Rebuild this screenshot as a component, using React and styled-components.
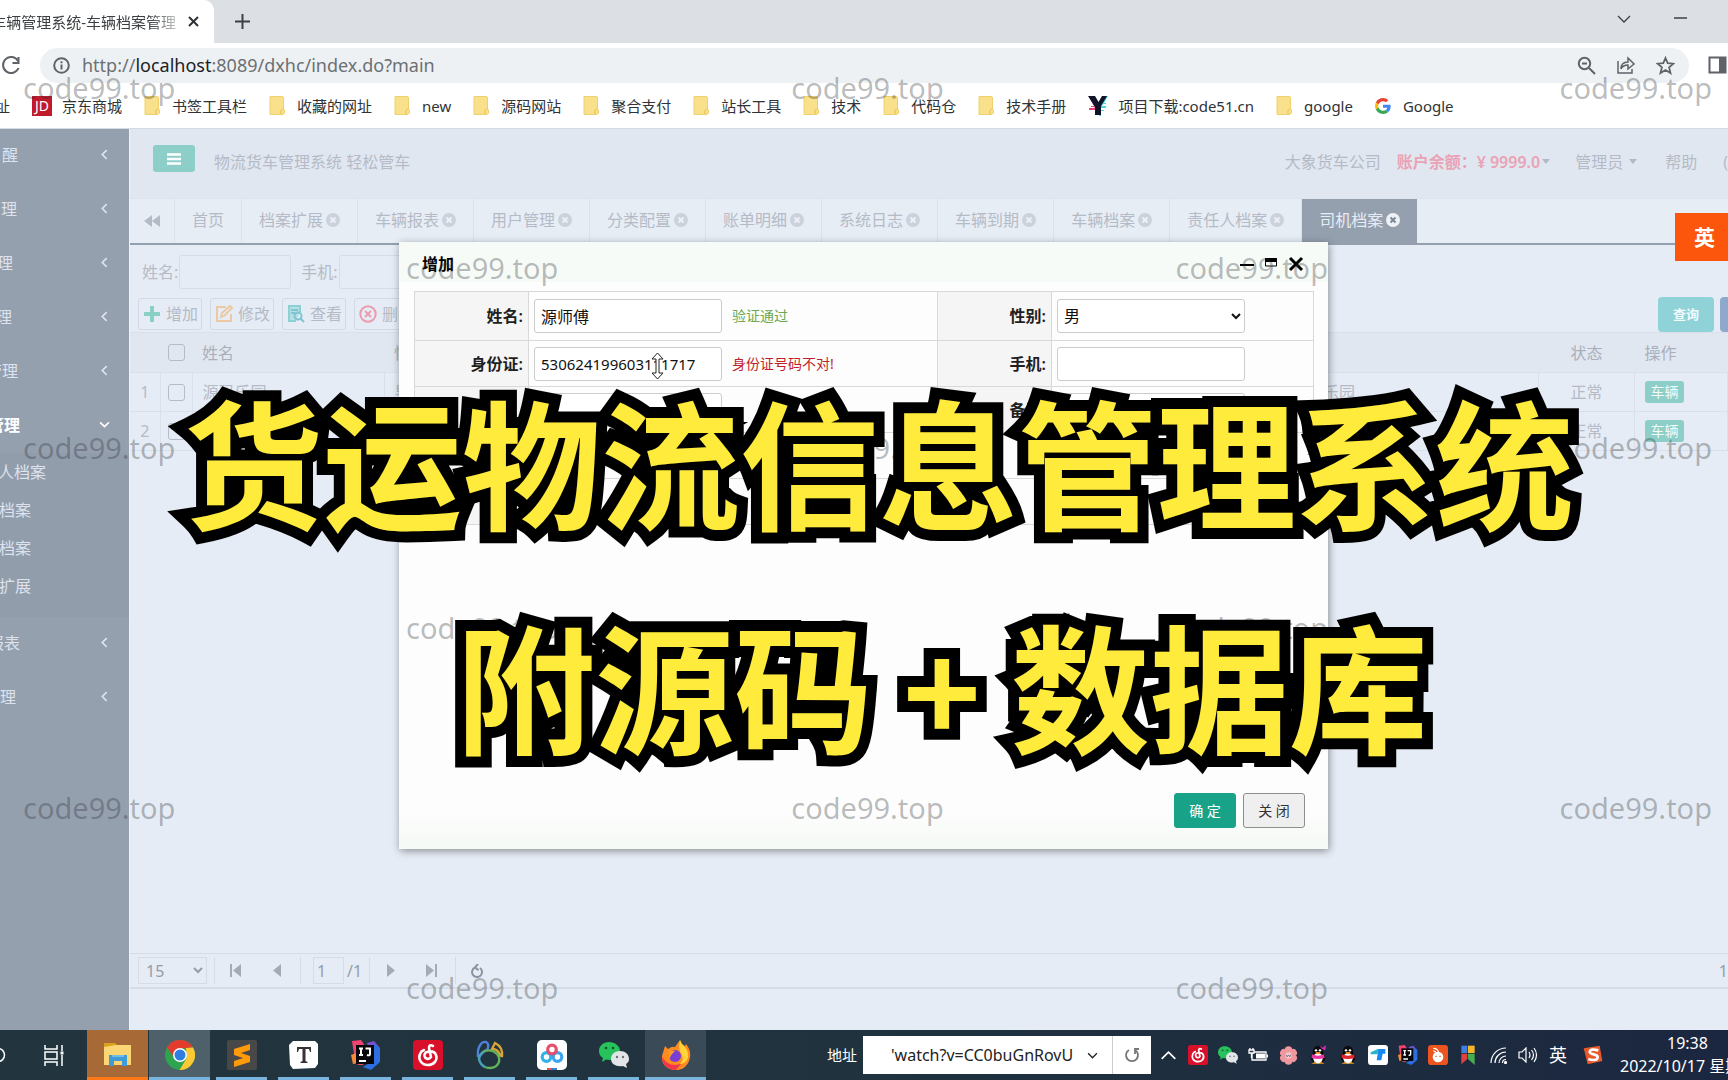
import React from "react";
import styled, { createGlobalStyle, css } from "styled-components";

const GlobalStyle = createGlobalStyle`
  *, *::before, *::after { box-sizing: border-box; }
  body {
    margin: 0;
    overflow: hidden;
    font-family: "Noto Sans", "Noto Sans CJK SC", sans-serif;
    font-size: 16px;
    line-height: 24px;
    color: #2f3336;
    background: #e6ecf5;
  }
  button, input, select { font: inherit; color: inherit; margin: 0; }
  button { padding: 0; border: 0; background: none; cursor: pointer; }
  a { color: inherit; text-decoration: none; }
  svg { display: block; flex: none; }
`;

const Screen = styled.div`
  position: relative;
  display: flex;
  flex-direction: column;
  height: 100vh;
  overflow: hidden;
`;

/* ---------- browser chrome ---------- */
const TabStrip = styled.div`
  display: flex;
  align-items: stretch;
  height: 43px;
  flex: none;
  background: #dce0e4;
`;
const BrowserTab = styled.div`
  display: flex;
  align-items: center;
  gap: 12px;
  width: 214px;
  padding-right: 13px;
  background: #fff;
  border-radius: 0 10px 0 0;
`;
const BrowserTabTitle = styled.span`
  display: flex;
  justify-content: flex-end;
  width: 176px;
  overflow: hidden;
  white-space: nowrap;
  font-size: 15px;
  color: #3c4043;
  mask-image: linear-gradient(to right, #000 85%, rgba(0, 0, 0, 0.3));
`;
const StripButton = styled.button`
  display: grid;
  place-items: center;
  width: 56px;
  color: #3c4043;
`;
const Grow = styled.div`
  flex: 1;
`;
const StripEnd = styled.div`
  width: 20px;
`;
const AddressRow = styled.div`
  display: flex;
  align-items: center;
  gap: 19px;
  height: 44px;
  flex: none;
  overflow: hidden;
  background: #fff;
  color: #5f6368;
`;
const Omnibox = styled.div`
  display: flex;
  align-items: center;
  gap: 12px;
  flex: 1;
  height: 35px;
  padding: 0 14px 0 13px;
  border-radius: 18px;
  background: #eef1f3;
`;
const Url = styled.div`
  flex: 1;
  font-size: 18px;
  color: #6b7074;
  b { font-weight: 400; color: #202124; }
`;
const OmniButtons = styled.div`
  display: flex;
  gap: 20px;
`;
const IconButton = styled.button`
  display: grid;
  place-items: center;
`;
const Bookmarks = styled.nav`
  display: flex;
  align-items: center;
  gap: 22px;
  height: 42px;
  padding-bottom: 4px;
  flex: none;
  background: #fff;
  font-size: 15px;
  white-space: nowrap;
  border-bottom: 1px solid #d5dae3;
`;
const BookmarkTail = styled.a`
  display: flex;
  justify-content: flex-end;
  width: 10px;
  overflow: hidden;
`;
const Bookmark = styled.a`
  display: flex;
  align-items: center;
  gap: ${(p) => (p.$wide ? 10 : 12)}px;
`;
const JdMark = styled.span`
  display: grid;
  place-items: center;
  width: 20px;
  height: 20px;
  background: #c01a2c;
  color: #fff;
  font-size: 14px;
  line-height: 20px;
`;

/* ---------- application ---------- */
const Page = styled.div`
  position: relative;
  display: flex;
  flex: 1;
  min-height: 0;
`;
const Sidebar = styled.nav`
  width: 130px;
  flex: none;
  background: #95a0af;
  border-right: 1px solid #eef2f8;
  color: #dde2ec;
`;
const SideItem = styled.a`
  display: flex;
  align-items: center;
  justify-content: space-between;
  height: 54px;
  padding: 0 19px 3px 0;
  color: ${(p) => (p.$active ? "#fff" : "#dde2ec")};
  font-weight: ${(p) => (p.$active ? 600 : 400)};
`;
const SideLabel = styled.span`
  display: flex;
  justify-content: flex-end;
  width: ${(p) => p.$end}px;
  overflow: hidden;
  white-space: nowrap;
`;
const SubMenu = styled.div`
  padding-bottom: 12px;
  background: #929dac;
`;
const SubItem = styled.a`
  display: flex;
  align-items: center;
  height: 38px;
  padding-bottom: 1px;
`;

const Workspace = styled.main`
  display: flex;
  flex-direction: column;
  flex: 1;
  min-width: 0;
  background: #e6ecf5;
  color: #b5bbc6;
`;
const Header = styled.header`
  display: flex;
  align-items: center;
  height: 69px;
  padding: 0 0 4px 23px;
  flex: none;
  overflow: hidden;
  white-space: nowrap;
  background: #e1e7f1;
`;
const MenuButton = styled.button`
  display: grid;
  place-items: center;
  width: 42px;
  height: 27px;
  margin: 0 19px 6px 0;
  border-radius: 3px;
  background: #8dcec8;
  color: #fff;
`;
const HeaderLinks = styled.div`
  display: flex;
  align-items: center;
  gap: 16px;
`;
const HeaderLink = styled.a`
  display: flex;
  align-items: center;
  gap: ${(p) => (p.$red ? 2 : 6)}px;
  margin-right: ${(p) => p.$after || 0}px;
  svg { color: #b3b9c4; }
  ${(p) => p.$red && css`color: #e9a3b4; font-weight: 600;`}
`;
const Tabs = styled.div`
  display: flex;
  height: 47px;
  flex: none;
  border-top: 1px solid #dde3ed;
  border-bottom: 2px solid #95a0af;
  background: #e7edf5;
`;
const TabsBack = styled.button`
  display: grid;
  place-items: center;
  width: 45px;
  border-right: 1px solid #dbe1eb;
`;
const Tab = styled.button`
  display: flex;
  align-items: center;
  gap: 3px;
  padding: 0 17px 2px;
  border-right: 1px solid #dbe1eb;
  white-space: nowrap;
  ${(p) => p.$active && css`background: #95a0af; color: #e6ecf5; border: 0;`}
`;
const Filters = styled.div`
  display: flex;
  align-items: center;
  gap: 10px;
  height: 51px;
  padding: 2px 12px 0;
  flex: none;
`;
const Filter = styled.label`
  display: flex;
  align-items: center;
  gap: 1px;
  input {
    width: 112px;
    height: 34px;
    border: 1px solid #d6dce6;
    border-radius: 3px;
    background: transparent;
  }
`;
const Toolbar = styled.div`
  display: flex;
  align-items: center;
  gap: 8px;
  height: 36px;
  padding-left: 8px;
  flex: none;
  overflow: hidden;
`;
const ToolButton = styled.button`
  display: flex;
  align-items: center;
  gap: 5px;
  width: 64px;
  height: 32px;
  padding-left: 4px;
  border: 1px solid #d3d9e4;
  border-radius: 3px;
  white-space: nowrap;
`;
const QueryButton = styled.button`
  width: 56px;
  height: 35px;
  flex: none;
  border-radius: 4px;
  background: ${(p) => (p.$blue ? "#8fa9cc" : "#8fd3d9")};
  color: #f2fafb;
  font-size: 13px;
  font-weight: 600;
`;
const QueryGroup = styled.div`
  display: flex;
  gap: 6px;
  width: 70px;
  overflow: hidden;
`;
const DataTable = styled.table`
  width: 100%;
  table-layout: fixed;
  border-collapse: collapse;
  td, th {
    height: 39px;
    padding: 0 10px;
    border: 1px solid #dae0ea;
    border-left: 0;
    text-align: left;
    font-weight: 400;
    white-space: nowrap;
  }
  th { height: 40px; background: #e1e7f1; border-right: 0; color: #a9afba; }
  .center { text-align: center; padding: 0; }
`;
const Check = styled.input`
  appearance: none;
  display: block;
  width: 17px;
  height: 17px;
  margin: 0 auto;
  border: 1px solid #b5bcc8;
  border-radius: 3px;
`;
const SmallButton = styled.button`
  display: block;
  width: 39px;
  height: 22px;
  border-radius: 3px;
  background: #8dcec8;
  color: #f0faf9;
  font-size: 14px;
  line-height: 22px;
`;
const Pager = styled.div`
  display: flex;
  align-items: center;
  height: 36px;
  padding-left: 8px;
  margin-bottom: 41px;
  flex: none;
  border-top: 1px solid #d6dce5;
  border-bottom: 2px solid #d6dce5;
  color: #969ca7;
`;
const PageSize = styled.select`
  width: 69px;
  height: 27px;
  padding: 0 3px;
  border: 1px solid #d6dce5;
  background: transparent;
`;
const PageInput = styled.input`
  width: 31px;
  height: 27px;
  margin-left: 12px;
  margin-right: 3px;
  padding: 0 3px;
  border: 1px solid #d6dce5;
  background: transparent;
`;
const PagerRule = styled.span`
  width: 1px;
  height: 27px;
  margin-left: ${(p) => p.$gap}px;
  background: #d6dce5;
`;
const PagerButton = styled.button`
  display: grid;
  place-items: center;
  width: 41px;
  height: 27px;
  color: #a5abb6;
`;

/* ---------- dialog ---------- */
const Dialog = styled.section`
  position: absolute;
  left: 399px;
  top: 113px;
  right: 400px;
  height: 607px;
  display: flex;
  flex-direction: column;
  background: #fdfdfd;
  color: #1f1f1f;
  box-shadow: 1px 2px 8px rgba(0, 0, 0, 0.4);
`;
const DialogHead = styled.header`
  display: flex;
  align-items: center;
  gap: 11px;
  height: 40px;
  padding: 4px 24px 0 23px;
  background: #f7fbf7;
  color: #000;
  h2 { flex: 1; margin: 0; font-size: 16px; line-height: 24px; font-weight: 600; }
`;
const DialogBody = styled.div`
  flex: 1;
  padding: 9px 14px 9px 15px;
`;
const FormTable = styled.table`
  width: 100%;
  table-layout: fixed;
  border-collapse: collapse;
  th, td { height: 46px; padding: 0 5px; border: 1px solid #d9d9d9; }
  th { background: #f5f5f5; text-align: right; font-weight: 600; white-space: nowrap; }
  tr:first-child td, tr:first-child th { height: 49px; }
`;
const Field = styled.div`
  display: flex;
  align-items: center;
  gap: 10px;
`;
const control = css`
  width: 188px;
  height: 34px;
  padding: 0 6px;
  border: 1px solid #ccc;
  border-radius: 3px;
  background: #fff;
  color: #111;
`;
const TextInput = styled.input`
  ${control}
  font-size: ${(p) => (p.$digits ? 15 : 16)}px;
`;
const SelectInput = styled.select`
  ${control}
  padding: 0 2px;
`;
const Hint = styled.span`
  font-size: 14px;
  color: ${(p) => (p.$ok ? "#6ba84f" : "#c11f2b")};
`;
const RedLabel = styled.label`
  color: #a3123a;
`;
const DialogFoot = styled.footer`
  display: flex;
  justify-content: flex-end;
  gap: 7px;
  height: 76px;
  padding: 20px 23px 0 0;
  background: linear-gradient(#fdfdfd 50%, #f4f9f4);
`;
const DialogButton = styled.button`
  width: 62px;
  height: 35px;
  border: 1px solid ${(p) => (p.$primary ? "#18a388" : "#8e8e8e")};
  border-radius: 3px;
  background: ${(p) => (p.$primary ? "#18a388" : "#efefef")};
  color: ${(p) => (p.$primary ? "#fff" : "#333")};
  font-size: 14px;
`;
const Cursor = styled.div`
  position: absolute;
  left: 651px;
  top: 223px;
`;
const ImeBar = styled.div`
  position: absolute;
  right: 0;
  top: 84px;
  display: flex;
  align-items: center;
  gap: 14px;
  width: 53px;
  height: 48px;
  padding-left: 5px;
  overflow: hidden;
  background: #fb560c;
  color: #fff;
  font-size: 21px;
  font-weight: 600;
  &::before { content: ""; width: 1px; height: 38px; background: #fff; }
`;

/* ---------- overlays ---------- */
const Marks = styled.div`
  position: absolute;
  inset: 0;
  display: flex;
  flex-direction: column;
  padding-top: 68px;
  pointer-events: none;
`;
const MarkRow = styled.div`
  display: flex;
  justify-content: space-between;
  height: 180px;
  flex: none;
  padding: ${(p) => (p.$inner ? "0 400px 0 406px" : "0 16px 0 23px")};
  font-size: 29px;
  line-height: 40px;
  color: rgba(40, 44, 48, 0.33);
`;
const Caption = styled.div`
  position: absolute;
  inset: 0;
  padding-top: 359px;
  pointer-events: none;
  font-family: "Noto Sans CJK SC", sans-serif;
  font-size: 139px;
  line-height: 200px;
  font-weight: 700;
  white-space: pre;
  color: #ffeb3b;
  -webkit-text-stroke: 22px #000;
  paint-order: stroke fill;
`;
const CaptionLine = styled.div`
  height: 200px;
  padding-left: ${(p) => p.$start}px;
  margin-bottom: 24px;
`;
const Plus = styled.span`
  font-size: 132px;
`;

/* ---------- taskbar ---------- */
const Taskbar = styled.footer`
  display: flex;
  align-items: stretch;
  height: 50px;
  flex: none;
  overflow: hidden;
  background: linear-gradient(to right, #22353e, #20323e 50%, #1b2740);
  color: #fff;
`;
const SystemButtons = styled.div`
  display: flex;
  align-items: center;
  justify-content: space-between;
  width: 87px;
  padding-right: 22px;
`;
const TaskButton = styled.button`
  display: grid;
  place-items: center;
  width: 61px;
  margin-right: 1px;
  flex: none;
  background: ${(p) => p.$bg || "transparent"};
  background-image: linear-gradient(${(p) => p.$line || "#79b4de"}, ${(p) => p.$line || "#79b4de"});
  background-size: ${(p) => (p.$bg ? "100%" : "51px")} 3px;
  background-position: bottom center;
  background-repeat: no-repeat;
`;
const AddressTool = styled.label`
  display: flex;
  align-items: center;
  gap: 6px;
  font-size: 15px;
`;
const ToolField = styled.div`
  display: flex;
  align-items: center;
  width: 288px;
  height: 38px;
  background: #fff;
  color: #222;
  input {
    width: 224px;
    padding: 0 0 0 28px;
    border: 0;
    background: none;
    font-size: 16px;
  }
`;
const ToolRefresh = styled.button`
  display: grid;
  place-items: center;
  width: 39px;
  height: 38px;
  margin-left: auto;
  border-left: 1px solid #ccc;
  color: #777;
`;
const Tray = styled.div`
  display: flex;
  align-items: center;
  padding-left: 2px;
`;
const TrayCell = styled.button`
  display: grid;
  place-items: center;
  width: ${(p) => (p.$wide ? 40 : 30)}px;
  height: 50px;
  font-size: 18px;
`;
const Clock = styled.div`
  width: 115px;
  padding: 2px 0 0 7px;
  overflow: hidden;
  white-space: nowrap;
  line-height: 23px;
  div:first-child { padding-left: 47px; }
`;

/* ---------- drawings ---------- */
const S = ({ w = 20, h, vb, sw = 2, children }) => (
  <svg width={w} height={h || w} viewBox={vb || `0 0 ${w} ${h || w}`} fill="none" stroke="currentColor" strokeWidth={sw} aria-hidden="true">
    {children}
  </svg>
);
const Chevron = ({ d = "down", s = 10, sw = 2 }) => (
  <S w={s} vb="0 0 10 10" sw={sw}>
    <path d={{ down: "M1 3l4 4 4-4", left: "M7 1L3 5l4 4", up: "M1 7l4-4 4 4" }[d]} />
  </S>
);
const Caret = () => (
  <svg width="8" height="5" viewBox="0 0 8 5" aria-hidden="true"><path fill="currentColor" d="M0 0h8L4 5z" /></svg>
);
const Folder = () => (
  <svg width="16" height="19" viewBox="0 0 16 19" aria-hidden="true">
    <path fill="#f9e08a" stroke="#efd06c" d="M1 .5h12a1.500 1.500 0 0 1 1.500 1.500v11l1 1v3l-1.500 1.500H1z" />
    <path fill="none" stroke="#e8bd4e" d="M12 18v-3.500l2-2" />
  </svg>
);
const TabClose = ({ active }) => (
  <svg width="14" height="14" viewBox="0 0 14 14" aria-hidden="true">
    <circle cx="7" cy="7" r="7" fill={active ? "#eef2f7" : "#ccd2dc"} />
    <path d="M4.500 4.500l5 5m0-5l-5 5" stroke={active ? "#7d8897" : "#edf1f7"} strokeWidth="2" />
  </svg>
);
const GlitchY = () => (
  <svg width="20" height="20" viewBox="0 0 20 20" aria-hidden="true">
    <path fill="#f0427a" d="M1 1h6l4 7 4-7h2l-6 11v7H7v-5H1v-2h6l-1-1H3v-1h3z" />
    <path fill="#45d6df" d="M15 0h5l-4 7h2v1h-3l-1 2h4v2h-5v2h3v1h-3v5h-2z" />
    <path fill="#111328" d="M0 0h7l3.500 6L14 0h5l-6 10v9H7v-8z" />
  </svg>
);
const GoogleG = () => (
  <svg width="16" height="16" viewBox="0 0 48 48" aria-hidden="true">
    <path fill="#ea4335" d="M24 9.500c3.540 0 6.710 1.220 9.210 3.600l6.850-6.850C35.900 2.380 30.470 0 24 0 14.620 0 6.510 5.380 2.560 13.220l7.980 6.190C12.430 13.720 17.740 9.500 24 9.500z" />
    <path fill="#4285f4" d="M46.980 24.550c0-1.570-.15-3.090-.38-4.550H24v9.020h12.940c-.58 2.960-2.260 5.480-4.780 7.180l7.730 6c4.510-4.180 7.090-10.360 7.090-17.650z" />
    <path fill="#fbbc05" d="M10.530 28.590A14.500 14.500 0 0 1 9.770 24c0-1.600.27-3.140.76-4.590l-7.980-6.190A23.900 23.900 0 0 0 0 24c0 3.880.92 7.540 2.560 10.780z" />
    <path fill="#34a853" d="M24 48c6.480 0 11.930-2.130 15.890-5.810l-7.730-6c-2.150 1.450-4.920 2.300-8.160 2.300-6.260 0-11.570-4.220-13.470-9.910l-7.980 6.190C6.510 42.620 14.620 48 24 48z" />
  </svg>
);
const Art = ({ s = 30, children }) => (
  <svg width={s} height={s} viewBox="0 0 30 30" aria-hidden="true">{children}</svg>
);
const Explorer = () => (
  <Art>
    <path fill="#d9a11c" d="M1 3h11l2 2h6v4H1z" /><path fill="#fbd675" d="M1 7l12-2h15v20H1z" />
    <path fill="#3f9bd5" d="M6 15h18v11h-5v-5h-8v5H6z" /><path fill="#75bce5" d="M9 15h12v2H9z" />
  </Art>
);
const ChromeIcon = () => (
  <Art>
    <circle cx="15" cy="15" r="15" fill="#2ea44f" />
    <path fill="#e33b2e" d="M2 7.500A15 15 0 0 1 28 7.500L15 8.500l-6.500 8z" />
    <path fill="#fcc934" d="M28 7.500A15 15 0 0 1 14.500 30l7-11.500L21 8z" />
    <circle cx="15" cy="15" r="7" fill="#fff" /><circle cx="15" cy="15" r="5.500" fill="#2f7de1" />
  </Art>
);
const Sublime = () => (
  <Art><rect width="30" height="30" rx="2" fill="#484848" /><path fill="#ff9a0b" d="M7 9l16-5v6l-9 3 9 3v6L7 27v-6l9-3-9-3z" /></Art>
);
const Typora = () => (
  <Art><path fill="#fff" d="M4 1h22l3 3v20l-3 4-22 1-3-4L0 5z" /><path fill="#333" d="M8 7h14v5h-1l-1-3h-3.500v12l2 1v1h-7v-1l2-1V9H10l-1 3H8z" /></Art>
);
const Idea = ({ s }) => (
  <Art s={s}>
    <path fill="#ef4470" d="M1 1l9-1 6 9-4 16H7l-3-4z" /><path fill="#f98a3b" d="M0 15l8-3v11l-6 1z" />
    <path fill="#7b50d0" d="M16 3l7-2 6 7-8 10z" /><path fill="#2d6fe0" d="M22 3l7 5v14l-9 8-8-3 8-5z" />
    <rect x="5" y="5" width="18" height="19" fill="#08080c" />
    <path stroke="#fff" strokeWidth="2" fill="none" d="M8 8.500h4M10 8v7M8 15h4M19 8v6q0 2-3 1M14.500 8.500H20M8 21h7" />
  </Art>
);
const Netease = ({ s }) => (
  <Art s={s}>
    <rect width="30" height="30" rx="4" fill="#d9102a" />
    <path fill="none" stroke="#fff" strokeWidth="2.600" strokeLinecap="round" d="M20 6q-4-2-4 2l2 9a3.500 3.500 0 1 1-4-5q7-2 9 3c2 6-3 10-8 10-7 0-10-6-8-11q1-3 4-4" />
  </Art>
);
const Navicat = () => (
  <Art>
    <g fill="none" strokeWidth="2.400">
      <path stroke="#4f80da" d="M3 16C2 8 6 1 11 2q4 2 1 8-4 1-7 6z" /><path stroke="#d6a53a" d="M17 9l3-6q8 4 7 13-2 0-3-3-2-4-7-4z" />
      <path stroke="#4aa0b8" d="M8 12q-6 5-3 10 2 4 5 5" /><path stroke="#62b35a" d="M8 12q8-4 14 2c5 6 1 14-7 14q-3 0-5-1" />
    </g>
  </Art>
);
const Netdisk = () => (
  <Art>
    <rect width="30" height="30" rx="5" fill="#fff" />
    <g fill="none" strokeWidth="3.200"><circle cx="9.500" cy="17" r="4.300" stroke="#32b2e8" /><circle cx="20.500" cy="17" r="4.300" stroke="#3aa4ee" /><circle cx="15" cy="9.500" r="4.300" stroke="#e64e6a" /></g>
    <path stroke="#e64e6a" strokeWidth="2" d="M10 29h5" /><path stroke="#3a7fd0" strokeWidth="2" d="M15 29h5" />
  </Art>
);
const Wechat = ({ s }) => (
  <Art s={s}>
    <path fill="#27c25c" d="M10 2c6 0 11 4 11 9s-5 9-11 9l-3-.5L3 22l1-4C1 16 0 14 0 11c0-5 4-9 10-9z" />
    <circle cx="7" cy="8" r="1.300" fill="#17512d" /><circle cx="14" cy="8" r="1.300" fill="#17512d" />
    <path fill="#e3e6e8" d="M21 11c5 0 9 3 9 8 0 2-1 4-3 5l1 4-4-2c-7 1-12-2-12-7s4-8 9-8z" />
    <circle cx="18" cy="17" r="1.200" fill="#6d7275" /><circle cx="24" cy="17" r="1.200" fill="#6d7275" />
  </Art>
);
const Firefox = () => (
  <Art>
    <path fill="#ff8a1f" d="M4 6l3 3q4-3 7-2l5-7q1 4 5 6l1-2c5 6 5 12 3 17-3 7-8 9-13 9C6 30 0 24 1 16z" />
    <path fill="#ffd43a" d="M19 0q1 4 5 7 5 6 2 13-3 4-7 4 5-5 1-11-3-4-1-13z" />
    <path fill="#f4364c" d="M1 17q5 8 13 8l6-1-5 6C7 30 1 25 1 17z" /><circle cx="14" cy="16" r="6" fill="#7a3fd0" /><path fill="#ff9a26" d="M7 10l7 1-3 3-3 5z" />
  </Art>
);
const Flower = () => (
  <Art s={19}>
    {[0, 60, 120, 180, 240, 300].map((a) => <circle key={a} cx="15" cy="6.500" r="6" fill="#f0979e" transform={`rotate(${a} 15 15)`} />)}
    <circle cx="15" cy="15" r="5" fill="#f8c9cb" /><path stroke="#6a6f80" strokeWidth="1.500" fill="none" d="M11 14l2 3 2-3 2 3 2-3" />
  </Art>
);
const Penguin = ({ pink }) => (
  <Art s={20}>
    <ellipse cx="15" cy="10" rx="8" ry="9" fill="#0b0b0f" /><ellipse cx="15" cy="19" rx="11" ry="9" fill="#0b0b0f" /><ellipse cx="15" cy="20" rx="7" ry="8" fill="#fff" />
    <circle cx="12" cy="8" r="1.800" fill="#fff" /><circle cx="18" cy="8" r="1.800" fill="#fff" /><ellipse cx="15" cy="12" rx="4" ry="1.500" fill="#f6a21b" />
    <path fill={pink ? "#e934a4" : "#e0262c"} d="M6 14q9 4 18 0l1 5q-10 4-20 0z" /><path fill="#f6a21b" d="M5 28l6-3 3 3zM25 28l-6-3-3 3z" />
    {pink && <path fill="#d42bb8" d="M17 1l5 3 5-4-1 8-5-2z" />}
  </Art>
);
const Tim = () => (
  <Art s={20}><rect width="30" height="30" rx="5" fill="#fff" /><path fill="#25b7c9" d="M4 11l11-5h3l-3 5-1 3H4z" /><path fill="#1987ee" d="M16 6h10v7h-4l-2 10h-7l2-12z" /></Art>
);
const OrangeApp = () => (
  <Art s={20}><rect width="30" height="30" rx="5" fill="#ee5420" /><circle cx="15" cy="18" r="8" fill="#fff" /><path stroke="#fff" strokeWidth="2" fill="none" d="M8 5q7 0 8 7M8 9q3 0 5 4" /><path stroke="#ee5420" strokeWidth="2" d="M12 16v2M18 16v2" /></Art>
);
const Ribbon = () => (
  <Art s={20}><path fill="#3d7fe2" d="M5 1h9v11H5z" /><path fill="#f5b62a" d="M15 1h10v11H15z" /><path fill="#e24141" d="M5 13h9v8l-9 8z" /><path fill="#46ac4e" d="M15 13h10v17l-10-9z" /></Art>
);
const Sogou = () => (
  <Art s={20}><path fill="#e8592b" d="M1 5l24-4 4 23-22 5z" /><path fill="none" stroke="#fff" strokeWidth="4" d="M23 8q-12-3-13 2c0 5 12 3 12 8 0 6-9 5-14 3" /></Art>
);

const bookmarks = [
  ["京东商城", "jd"], ["书签工具栏"], ["收藏的网址"], ["new"], ["源码网站"], ["聚合支付"], ["站长工具"], ["技术"],
  ["代码仓"], ["技术手册"], ["项目下载:code51.cn", "y"], ["google"], ["Google", "g"],
];
const bookmarkIcon = { jd: <JdMark>JD</JdMark>, y: <GlitchY />, g: <GoogleG /> };
const tabs = ["档案扩展", "车辆报表", "用户管理", "分类配置", "账单明细", "系统日志", "车辆到期", "车辆档案", "责任人档案", "司机档案"];
const sideTop = [["醒", 18], ["理", 17], ["理", 13], ["理", 12], ["管理", 18]];
const sideSub = [["人档案", 46], ["档案", 31], ["档案", 31], ["扩展", 31]];
const sideBottom = [["报表", 20], ["理", 16]];
const taskIcons = [
  [<Explorer />, "文件资源管理器", "#a76a36", "#ff7818"], [<ChromeIcon />, "Chrome", "#4e606a"], [<Sublime />, "Sublime"], [<Typora />, "Typora"],
  [<Idea />, "IDEA"], [<Netease />, "网易云音乐"], [<Navicat />, "Navicat"], [<Netdisk />, "百度网盘"], [<Wechat />, "微信"], [<Firefox />, "Firefox", "#3a4a56"],
];

const SideLink = ({ item, active }) => (
  <SideItem href="#" $active={active}>
    <SideLabel $end={item[1]}>{item[0]}</SideLabel>
    <Chevron d={active ? "down" : "left"} s={11} sw={1.5} />
  </SideItem>
);

export default function App() {
  return (
    <Screen>
      <GlobalStyle />
      <TabStrip>
        <BrowserTab>
          <BrowserTabTitle>车辆管理系统-车辆档案管理</BrowserTabTitle>
          <IconButton aria-label="关闭标签页"><S w={11}><path d="M1 1l9 9M10 1l-9 9" /></S></IconButton>
        </BrowserTab>
        <StripButton aria-label="新标签页"><S w={15}><path d="M7.500 0v15M0 7.500h15" /></S></StripButton>
        <Grow />
        <StripButton aria-label="搜索标签页"><S w={14} sw={1.3}><path d="M1 1l6 6 6-6" /></S></StripButton>
        <StripButton aria-label="最小化"><S w={14} sw={1.5}><path d="M1 3h13" /></S></StripButton>
        <StripEnd />
      </TabStrip>
      <AddressRow>
        <IconButton aria-label="重新加载"><S w={21}><path d="M18 6A8 8 0 1 0 18.500 13M18.500 2v6h-6" /></S></IconButton>
        <Omnibox>
          <S w={17} sw={2}><circle cx="8.500" cy="8.500" r="7.300" /><path d="M8.500 7.500v5M8.500 4.200v2" /></S>
          <Url>http://<b>localhost</b>:8089/dxhc/index.do?main</Url>
          <OmniButtons>
            <IconButton aria-label="缩放"><S w={19}><circle cx="7.500" cy="7.500" r="5.700" /><path d="M12 12l6 6M5 7.500h5" /></S></IconButton>
            <IconButton aria-label="分享"><S w={20} sw={1.5}><path d="M2 6v12h14v-4M5 14q0-7 7-7V3l6 6-6 5v-4q-5 0-7 4z" /></S></IconButton>
            <IconButton aria-label="收藏"><S w={19} sw={1.8}><path d="M9.500 2l2.200 5.200 5.800.5-4.400 3.700 1.400 5.600-5-3-5 3 1.400-5.600L1.500 7.700l5.800-.5z" /></S></IconButton>
          </OmniButtons>
        </Omnibox>
        <IconButton aria-label="侧边栏"><S w={20} h={18}><path d="M1.500 1.500h16v15h-16z" /><path fill="currentColor" stroke="none" d="M11 1h7v16h-7z" /></S></IconButton>
      </AddressRow>
      <Bookmarks>
        <BookmarkTail href="#">址</BookmarkTail>
        {bookmarks.map(([name, icon]) => (
          <Bookmark key={name} href="#" $wide={icon === "jd" || icon === "y"}>
            {icon ? bookmarkIcon[icon] : <Folder />}
            {name}
          </Bookmark>
        ))}
      </Bookmarks>

      <Page>
        <Sidebar>
          {sideTop.map((item, i) => <SideLink key={i} item={item} />)}
          <SideLink item={["管理", 20]} active />
          <SubMenu>
            {sideSub.map(([t, end], i) => <SubItem key={i} href="#"><SideLabel $end={end}>{t}</SideLabel></SubItem>)}
          </SubMenu>
          {sideBottom.map((item, i) => <SideLink key={i} item={item} />)}
        </Sidebar>

        <Workspace>
          <Header>
            <MenuButton aria-label="菜单"><S w={14} h={12} sw={2.4}><path d="M0 1.500h14M0 6h14M0 10.500h14" /></S></MenuButton>
            <span>物流货车管理系统 轻松管车</span>
            <Grow />
            <HeaderLinks>
              <HeaderLink href="#">大象货车公司</HeaderLink>
              <HeaderLink href="#" $red $after={9}>账户余额：¥ 9999.0<Caret /></HeaderLink>
              <HeaderLink href="#" $after={12}>管理员 <Caret /></HeaderLink>
              <HeaderLink href="#" $after={26}>帮助</HeaderLink>
            </HeaderLinks>
            <span>(</span>
          </Header>
          <Tabs>
            <TabsBack aria-label="向左"><svg width="16" height="12" viewBox="0 0 16 12" aria-hidden="true"><path fill="currentColor" d="M8 0v12L0 6zM16 0v12L8 6z" /></svg></TabsBack>
            <Tab>首页</Tab>
            {tabs.map((t, i) => (
              <Tab key={t} $active={i === 9}>{t}<TabClose active={i === 9} /></Tab>
            ))}
          </Tabs>
          <Filters>
            <Filter>姓名:<input type="text" /></Filter>
            <Filter>手机:<input type="text" /></Filter>
          </Filters>
          <Toolbar>
            <ToolButton><S w={18} sw={4}><path stroke="#8bd0c4" d="M9 1v16M1 9h16" /></S>增加</ToolButton>
            <ToolButton><S w={18}><path stroke="#ecc9a4" d="M11 2H2v14h14V9M6 12l1-4 8-7 2 2-8 8z" /></S>修改</ToolButton>
            <ToolButton><S w={18}><path stroke="#8bd0d3" fill="#b5dfe4" d="M13 7V1H2v15h7" /><path stroke="#7fc4d0" d="M4 5h7M4 8h4" /><circle cx="11" cy="11" r="3.500" stroke="#7fc4d0" /><path stroke="#7fc4d0" d="M13.500 13.500L17 17" /></S>查看</ToolButton>
            <ToolButton><S w={18}><circle cx="9" cy="9" r="7.700" stroke="#ea9cae" /><path stroke="#ea9cae" d="M6 6l6 6M12 6l-6 6" /></S>删除</ToolButton>
            <Grow />
            <QueryGroup><QueryButton>查询</QueryButton><QueryButton $blue aria-label="重置" /></QueryGroup>
          </Toolbar>
          <DataTable>
            <colgroup>
              <col width="30" /><col width="32" /><col width="192" /><col width="120" /><col /><col width="258" /><col width="96" /><col width="93" />
            </colgroup>
            <thead>
              <tr>
                <th /><th className="center"><Check type="checkbox" aria-label="全选" /></th><th>姓名</th><th>性别</th><th /><th /><th className="center">状态</th><th>操作</th>
              </tr>
            </thead>
            <tbody>
              {[1, 2].map((n) => (
                <tr key={n}>
                  <td className="center">{n}</td>
                  <td className="center"><Check type="checkbox" aria-label={`选择 ${n}`} /></td>
                  <td>{n === 1 ? "源码乐园" : ""}</td><td>{n === 1 ? "男" : ""}</td><td /><td>{n === 1 ? "源码乐园" : ""}</td>
                  <td className="center">正常</td><td><SmallButton>车辆</SmallButton></td>
                </tr>
              ))}
            </tbody>
          </DataTable>
          <Grow />
          <Pager>
            <PageSize aria-label="每页条数" defaultValue="15"><option>15</option></PageSize>
            <PagerRule $gap={7} />
            <PagerButton aria-label="首页"><svg width="11" height="13" viewBox="0 0 11 13"><path fill="currentColor" d="M0 0h2v13H0zM11 0v13L3 6.500z" /></svg></PagerButton>
            <PagerButton aria-label="上一页"><svg width="8" height="13" viewBox="0 0 8 13"><path fill="currentColor" d="M8 0v13L0 6.500z" /></svg></PagerButton>
            <PagerRule $gap={3} />
            <PageInput aria-label="页码" defaultValue="1" />
            /1
            <PagerRule $gap={7} />
            <PagerButton aria-label="下一页"><svg width="8" height="13" viewBox="0 0 8 13"><path fill="currentColor" d="M0 0v13l8-6.500z" /></svg></PagerButton>
            <PagerButton aria-label="末页"><svg width="11" height="13" viewBox="0 0 11 13"><path fill="currentColor" d="M9 0h2v13H9zM0 0v13l8-6.500z" /></svg></PagerButton>
            <PagerRule $gap={3} />
            <PagerButton aria-label="刷新"><S w={14}><path stroke="#8d939e" d="M5 3.500a5 5 0 1 0 5 .5M8 0L5 3.300l3.500 3" /></S></PagerButton>
            <Grow />
            1
          </Pager>
        </Workspace>

        <Dialog role="dialog" aria-label="增加">
          <DialogHead>
            <h2>增加</h2>
            <IconButton aria-label="最小化"><S w={14}><path d="M0 8h14" /></S></IconButton>
            <IconButton aria-label="最大化"><S w={12} h={14}><path strokeWidth="1" d="M.5 3v6h11V3" /><path strokeWidth="4" d="M0 3h12" /></S></IconButton>
            <IconButton aria-label="关闭"><S w={16} sw={3}><path d="M2 2l12 12M14 2L2 14" /></S></IconButton>
          </DialogHead>
          <DialogBody>
            <FormTable>
              <colgroup><col width="114" /><col /><col width="114" /><col width="262" /></colgroup>
              <tbody>
                <tr>
                  <th><label htmlFor="name">姓名:</label></th>
                  <td><Field><TextInput id="name" defaultValue="源师傅" /><Hint $ok>验证通过</Hint></Field></td>
                  <th><label htmlFor="sex">性别:</label></th>
                  <td><Field><SelectInput id="sex"><option>男</option></SelectInput></Field></td>
                </tr>
                <tr>
                  <th><label htmlFor="idcard">身份证:</label></th>
                  <td><Field><TextInput id="idcard" $digits defaultValue="530624199603111717" /><Hint>身份证号码不对!</Hint></Field></td>
                  <th><label htmlFor="phone">手机:</label></th>
                  <td><Field><TextInput id="phone" /></Field></td>
                </tr>
                <tr>
                  <th />
                  <td><Field><TextInput aria-label="地址" /></Field></td>
                  <th><label htmlFor="note">备注:</label></th>
                  <td><Field><TextInput id="note" /></Field></td>
                </tr>
                <tr><th><RedLabel>日期止:</RedLabel></th><td colSpan="3" /></tr>
                <tr><th /><td colSpan="3" /></tr>
              </tbody>
            </FormTable>
          </DialogBody>
          <DialogFoot>
            <DialogButton $primary>确 定</DialogButton>
            <DialogButton>关 闭</DialogButton>
          </DialogFoot>
        </Dialog>
        <Cursor>
          <svg width="13" height="28" viewBox="0 0 13 28" aria-hidden="true"><path fill="#fff" stroke="#222" d="M6.500 1L12 7H8v14h4l-5.500 6L1 21h4V7H1z" /></svg>
        </Cursor>
        <ImeBar>英 <span>'</span></ImeBar>
      </Page>

      <Taskbar>
        <SystemButtons>
          <S w={6} h={16} sw={1.5}><circle cx="-2" cy="8" r="6.500" /></S>
          <S w={21} sw={1.5}><path d="M1 0v4h12V0M1 21v-4h12v4M1 7h12v7H1zM18 0v6M18 10v11" /><path strokeWidth="3" d="M16.500 8h3" /></S>
        </SystemButtons>
        {taskIcons.map(([icon, label, bg, line]) => (
          <TaskButton key={label} aria-label={label} $bg={bg} $line={line}>{icon}</TaskButton>
        ))}
        <Grow />
        <AddressTool>
          地址
          <ToolField>
            <input defaultValue="'watch?v=CC0buGnRovU" />
            <Chevron s={11} sw={1.2} />
            <ToolRefresh aria-label="转到"><S w={16} sw={1.8}><path d="M5 3a6 6 0 1 0 6 0M11 7V2h4" /></S></ToolRefresh>
          </ToolField>
        </AddressTool>
        <Tray>
          <TrayCell aria-label="显示隐藏的图标"><Chevron d="up" s={17} sw={1} /></TrayCell>
          <TrayCell aria-label="网易云音乐"><Netease s={20} /></TrayCell>
          <TrayCell aria-label="微信"><Wechat s={20} /></TrayCell>
          <TrayCell aria-label="电池"><S w={20} h={16} sw={1.3}><path d="M4 5h14v8H4z" /><path fill="currentColor" stroke="none" d="M8 6.500h9v5H8zM18.500 7.500H20v3h-1.500z" /><path fill="#20303f" d="M1 3h5v3H1z" /><path d="M2 1v2M5 1v2M3.500 6v5" /></S></TrayCell>
          <TrayCell aria-label="花"><Flower /></TrayCell>
          <TrayCell aria-label="QQ"><Penguin pink /></TrayCell>
          <TrayCell aria-label="QQ 2"><Penguin /></TrayCell>
          <TrayCell aria-label="TIM"><Tim /></TrayCell>
          <TrayCell aria-label="IDEA"><Idea s={20} /></TrayCell>
          <TrayCell aria-label="直播"><OrangeApp /></TrayCell>
          <TrayCell aria-label="安全"><Ribbon /></TrayCell>
          <TrayCell aria-label="网络"><S w={17} sw={1.2}><path d="M1 16A15 15 0 0 1 16 1M5 16A11 11 0 0 1 16 5M9 16a7 7 0 0 1 7-7M12.500 16a3.500 3.500 0 0 1 3.500-3.500" /><circle cx="15.500" cy="15.500" r="1" fill="currentColor" /></S></TrayCell>
          <TrayCell aria-label="音量"><S w={20} h={16} sw={1.2}><path d="M1 5h3l4-4v14l-4-4H1zM11 5q2 3 0 6M13.500 3q4 5 0 10M16 1q5 7 0 14" /></S></TrayCell>
          <TrayCell>英</TrayCell>
          <TrayCell $wide aria-label="搜狗输入法"><Sogou /></TrayCell>
        </Tray>
        <Clock><div>19:38</div><div>2022/10/17 星期一</div></Clock>
      </Taskbar>

      <Marks>
        {[3, 2, 3, 2, 3, 2].map((count, row) => (
          <MarkRow key={row} $inner={count === 2}>
            {Array.from({ length: count }, (_, i) => <span key={i}>code99.top</span>)}
          </MarkRow>
        ))}
      </Marks>
      <Caption>
        <CaptionLine $start={184}>货运物流信息管理系统</CaptionLine>
        <CaptionLine $start={456}>附源码<Plus> + </Plus>数据库</CaptionLine>
      </Caption>
    </Screen>
  );
}
